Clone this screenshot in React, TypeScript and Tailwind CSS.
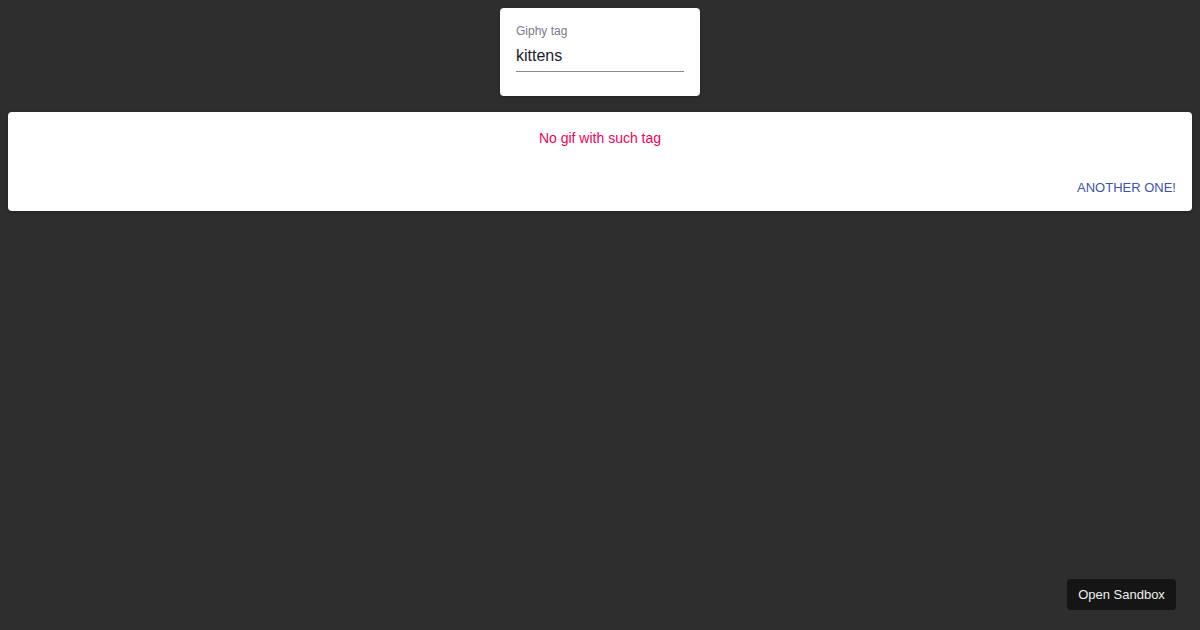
import React from "react";

export default function App() {
  return (
    <div
      className="min-h-[630px] w-full bg-[#2e2e2e] p-2 relative"
      style={{ fontFamily: '"Liberation Sans", Arial, sans-serif' }}
    >
      <div className="flex justify-center">
        <div className="w-[200px] h-[88px] bg-white rounded-[4px] shadow-[0_1px_3px_rgba(0,0,0,0.3)] px-4 pt-[16px]">
          <div className="text-[12px] leading-[14px] text-[#7a7a8a]">Giphy tag</div>
          <div className="mt-[8px] border-b border-[#8a8a8a] pb-[6px] text-[16px] leading-[19px] text-[#1c1c2c]">
            kittens
          </div>
        </div>
      </div>
      <div className="mt-4 bg-white rounded-[4px] shadow-[0_1px_3px_rgba(0,0,0,0.3)] h-[99px] flex flex-col px-4">
        <div className="pt-[18px] text-center text-[14px] leading-[16px] text-[#f50057]">
          No gif with such tag
        </div>
        <div className="mt-[34px] flex justify-end">
          <span className="text-[13px] leading-[16px] text-[#3f51b5] uppercase">Another one!</span>
        </div>
      </div>
      <div className="absolute right-[24px] bottom-[20px] w-[109px] h-[31px] bg-[#151515] rounded-[4px] flex items-center justify-center text-[13px] text-[#f0f0f0]">
        Open Sandbox
      </div>
    </div>
  );
}
